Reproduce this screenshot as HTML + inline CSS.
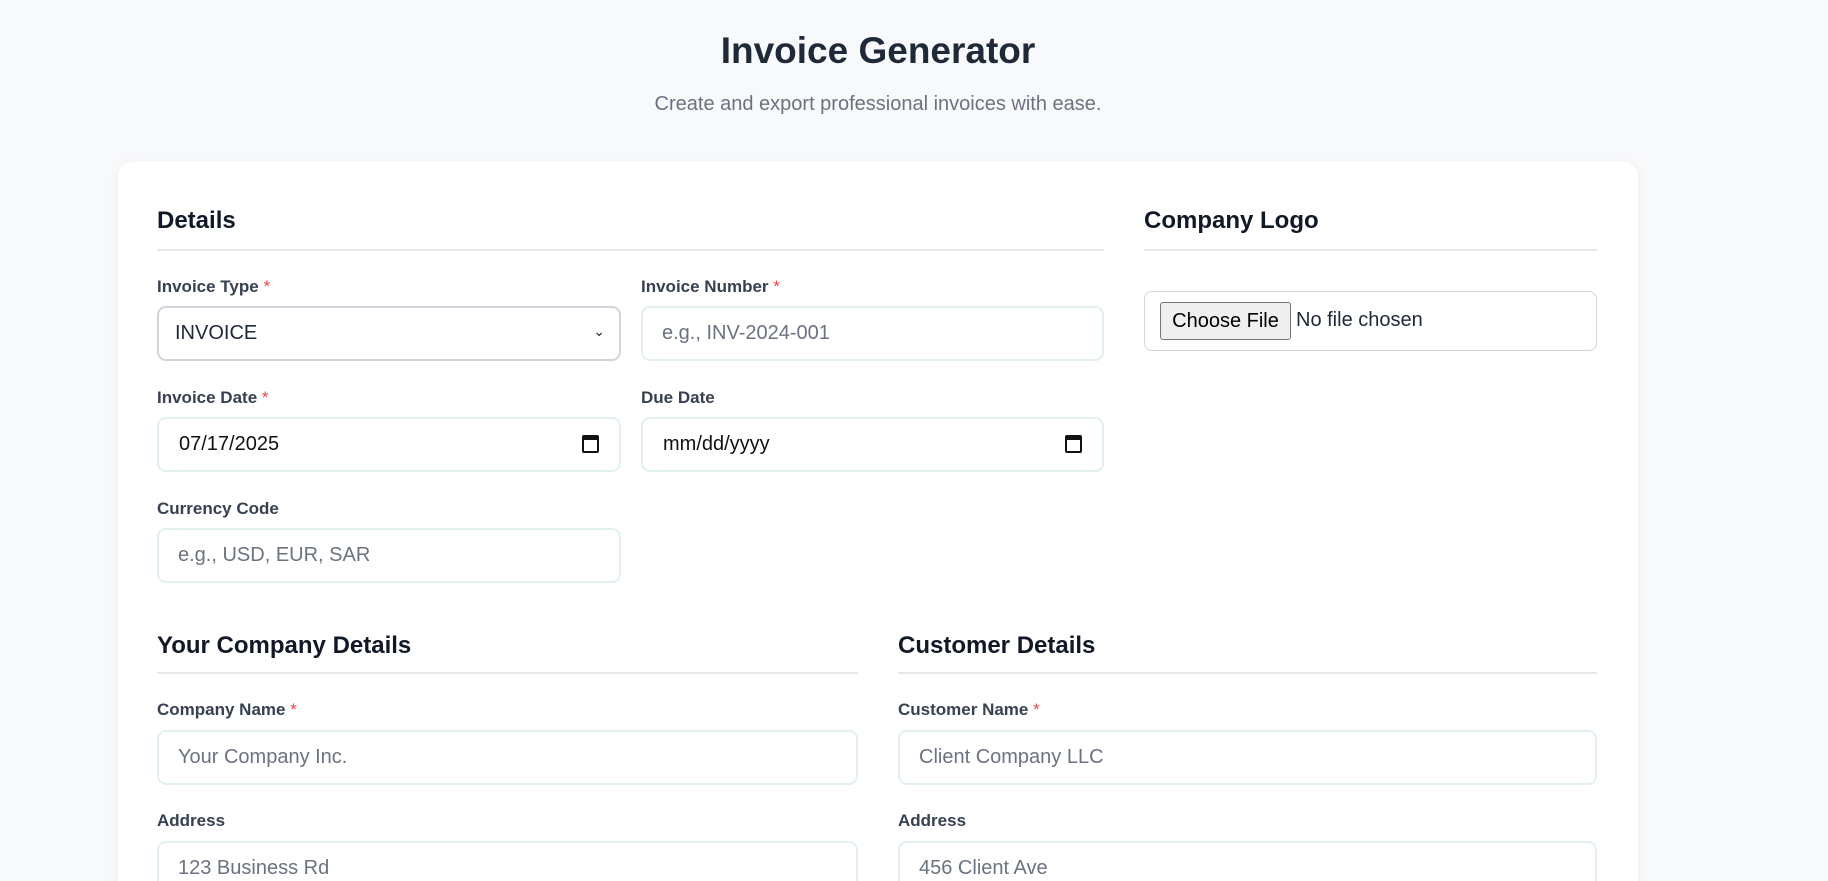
<!DOCTYPE html>
<html style="height:881px;overflow:hidden"><head><meta charset="utf-8">
<style>
*{box-sizing:border-box;margin:0;padding:0}
body{width:1828px;height:881px;overflow:hidden;background:#f8f9fb;font-family:"Liberation Sans",sans-serif;color:#1f2937;position:relative}
#w{position:absolute;left:0;top:0;width:1828px;height:881px;overflow:hidden}
.a{position:absolute}
h1{position:absolute;left:0;width:1756px;text-align:center;top:30px;font-size:37px;font-weight:700;color:#1f2937}
.sub{position:absolute;left:0;width:1756px;text-align:center;top:93px;font-size:20px;color:#6b7280}
.card{position:absolute;left:118px;top:162px;width:1520px;height:740px;background:#fff;border-radius:14px;box-shadow:0 2px 10px rgba(0,0,0,0.05)}
.h{position:absolute;font-size:24px;font-weight:700;color:#111827;border-bottom:2px solid #e5e7eb;padding-bottom:12px}
.l{position:absolute;font-size:17px;font-weight:700;color:#374151}
.l b{color:#ef4444;font-weight:400}
.i{position:absolute;height:55px;border:2px solid #e3f1ee;border-radius:9px;font-size:20px;color:#6b7280;padding-left:19px;line-height:51px;background:#fff}
.i.d{color:#111;padding-left:20px}
.cal{position:absolute;right:20px;top:16px;width:17px;height:18px;border:2px solid #111;border-top-width:5px;border-radius:2px}
</style></head><body><div id="w">
<h1>Invoice Generator</h1>
<div class="sub">Create and export professional invoices with ease.</div>
<div class="card"></div>

<div class="h" style="left:157px;top:207px;width:947px;height:44px">Details</div>
<div class="h" style="left:1144px;top:207px;width:453px;height:44px">Company Logo</div>

<div class="l" style="left:157px;top:277px">Invoice Type <b>*</b></div>
<div class="i d" style="left:157px;top:306px;width:464px;border-color:#d1d5db;padding-left:16px;color:#1f2937">INVOICE<span style="position:absolute;right:14px;top:-2px;font-size:14px">&#8964;</span></div>
<div class="l" style="left:641px;top:277px">Invoice Number <b>*</b></div>
<div class="i" style="left:641px;top:306px;width:463px">e.g., INV-2024-001</div>

<div class="l" style="left:157px;top:388px">Invoice Date <b>*</b></div>
<div class="i d" style="left:157px;top:417px;width:464px">07/17/2025<span class="cal"></span></div>
<div class="l" style="left:641px;top:388px">Due Date</div>
<div class="i d" style="left:641px;top:417px;width:463px">mm/dd/yyyy<span class="cal"></span></div>

<div class="l" style="left:157px;top:499px">Currency Code</div>
<div class="i" style="left:157px;top:528px;width:464px">e.g., USD, EUR, SAR</div>

<div class="a" style="left:1144px;top:291px;width:453px;height:60px;border:1.5px solid #d1d5db;border-radius:8px;background:#fff"></div>
<div class="a" style="left:1160px;top:302px;width:131px;height:38px;border:1px solid #767676;border-radius:3px;background:#efefef;font-size:20px;line-height:36px;text-align:center;color:#000">Choose File</div>
<div class="a" style="left:1296px;top:309px;font-size:20px;color:#1f2937">No file chosen</div>

<div class="h" style="left:157px;top:632px;width:701px;height:42px">Your Company Details</div>
<div class="h" style="left:898px;top:632px;width:699px;height:42px">Customer Details</div>

<div class="l" style="left:157px;top:700px">Company Name <b>*</b></div>
<div class="i" style="left:157px;top:730px;width:701px">Your Company Inc.</div>
<div class="l" style="left:898px;top:700px">Customer Name <b>*</b></div>
<div class="i" style="left:898px;top:730px;width:699px">Client Company LLC</div>

<div class="l" style="left:157px;top:811px">Address</div>
<div class="i" style="left:157px;top:841px;width:701px">123 Business Rd</div>
<div class="l" style="left:898px;top:811px">Address</div>
<div class="i" style="left:898px;top:841px;width:699px">456 Client Ave</div>
</div></body></html>
